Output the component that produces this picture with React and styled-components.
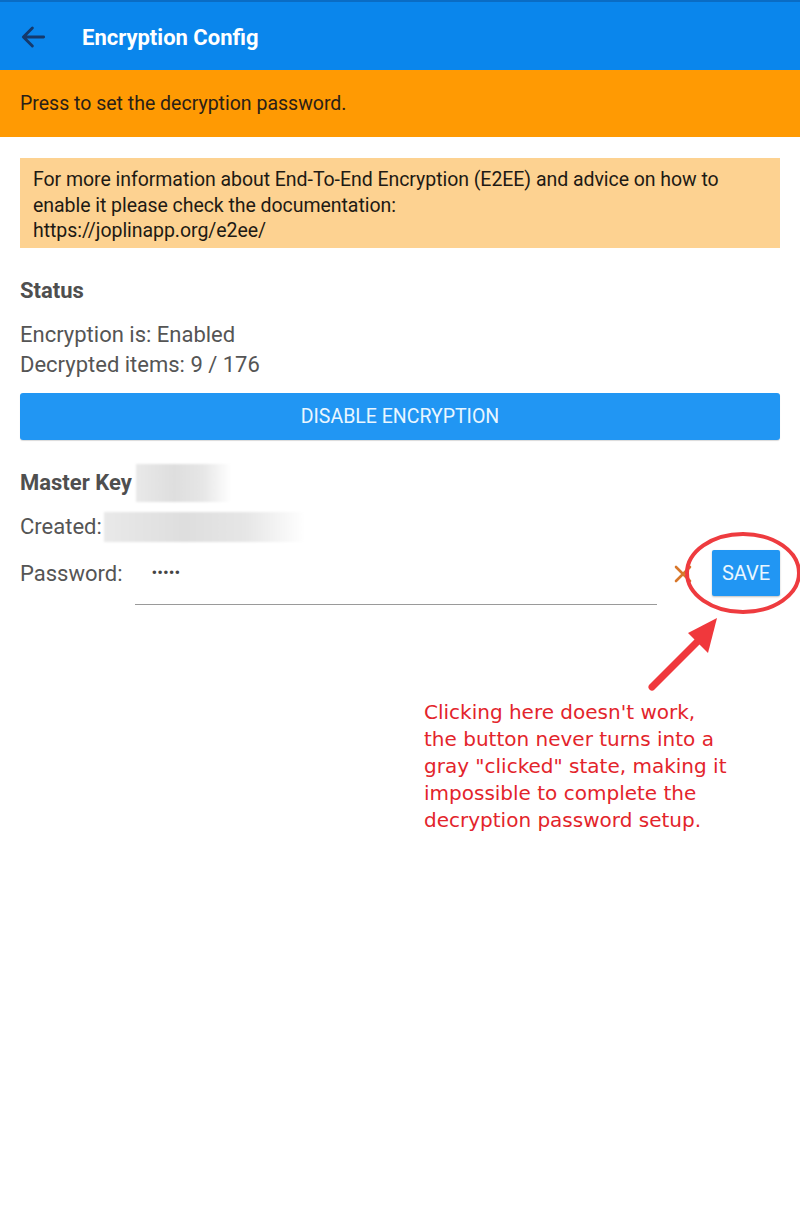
import React from 'react';
import styled, { createGlobalStyle } from 'styled-components';

// GLOBAL

const GlobalStyle = createGlobalStyle`
  html, body {
    margin: 0;
    padding: 0;
    background: #ffffff;
  }
  body {
    font-family: Roboto, "Noto Sans", "Liberation Sans", sans-serif;
    width: 800px;
    height: 1217px;
    overflow: hidden;
  }
`;

// COMPONENT

const BackArrow = () => (
  <svg width="30" height="30" viewBox="0 0 24 24">
    <path
      d="M20.5 12H4.5M11.5 4.8L4.3 12l7.2 7.2"
      fill="none"
      stroke="#15396b"
      strokeWidth="2.3"
      strokeLinecap="round"
      strokeLinejoin="round"
    />
  </svg>
);

const ClearIcon = () => (
  <svg width="18" height="18" viewBox="0 0 18 18">
    <path
      d="M2 2L16 16M16 2L2 16"
      stroke="#d8772b"
      strokeWidth="2.6"
      strokeLinecap="round"
    />
  </svg>
);

const App = () => {
  return (
    <Page>
      <GlobalStyle />
      <Header>
        <BackButton>
          <BackArrow />
        </BackButton>
        <Title>Encryption Config</Title>
      </Header>
      <Banner>Press to set the decryption password.</Banner>

      <Content>
        <InfoBox>
          For more information about End-To-End Encryption (E2EE) and advice on how to
          <br />
          enable it please check the documentation:
          <br />
          https://joplinapp.org/e2ee/
        </InfoBox>

        <SectionTitle $mt={29}>Status</SectionTitle>
        <StatusText>
          Encryption is: Enabled
          <br />
          Decrypted items: 9 / 176
        </StatusText>
        <WideButton>DISABLE ENCRYPTION</WideButton>

        <KeyRow $mt={24}>
          <SectionTitle>Master Key</SectionTitle>
          <Redacted $w={95} $h={38} $ml={4} />
        </KeyRow>
        <KeyRow $mt={10}>
          <Label>Created:</Label>
          <Redacted $w={201} $h={30} $ml={2} />
        </KeyRow>

        <PasswordRow>
          <Label>Password:</Label>
          <PasswordField>
            <Dots>•••••</Dots>
          </PasswordField>
          <ClearMark>
            <ClearIcon />
          </ClearMark>
          <SaveButton>SAVE</SaveButton>
        </PasswordRow>
      </Content>

      <Annotation>
        <svg width="800" height="1217" viewBox="0 0 800 1217">
          <ellipse
            cx="743"
            cy="573"
            rx="56"
            ry="39"
            fill="none"
            stroke="#ee3b3f"
            strokeWidth="4"
          />
          <line
            x1="652"
            y1="687"
            x2="703"
            y2="636"
            stroke="#f0383c"
            strokeWidth="7"
            strokeLinecap="round"
          />
          <polygon points="717,618 688,633 708,653" fill="#f0383c" />
        </svg>
        <Note>
          Clicking here doesn't work,
          <br />
          the button never turns into a
          <br />
          gray "clicked" state, making it
          <br />
          impossible to complete the
          <br />
          decryption password setup.
        </Note>
      </Annotation>
    </Page>
  );
};

// STYLES

const Page = styled.div`
  position: relative;
  width: 800px;
  height: 1217px;
  background: #ffffff;
`;

const Header = styled.div`
  display: flex;
  align-items: center;
  height: 70px;
  background: #0a86ec;
  border-top: 2px solid #0a6cc4;
  box-sizing: border-box;
`;

const BackButton = styled.div`
  display: flex;
  align-items: center;
  justify-content: center;
  width: 40px;
  margin-left: 13px;
  margin-right: 29px;
  margin-top: 2px;
`;

const Title = styled.div`
  color: #ffffff;
  font-weight: 700;
  font-size: 22px;
  margin-top: 2px;
`;

const Banner = styled.div`
  display: flex;
  align-items: center;
  height: 67px;
  padding: 0 20px;
  background: #ff9a03;
  color: #2a2017;
  font-size: 19.5px;
`;

const Content = styled.div`
  padding: 21px 20px 0;
  color: #555555;
`;

const InfoBox = styled.div`
  background: #fdd291;
  color: #1e1a14;
  padding: 9px 13px 4px;
  font-size: 19.5px;
  line-height: 25.5px;
  letter-spacing: -0.05px;
  white-space: nowrap;
`;

const SectionTitle = styled.div`
  margin-top: ${(p) => p.$mt || 0}px;
  font-weight: 700;
  font-size: 22px;
  line-height: 28px;
  color: #4f4f4f;
`;

const StatusText = styled.div`
  margin-top: 15px;
  font-size: 22px;
  line-height: 30px;
`;

const WideButton = styled.div`
  display: flex;
  align-items: center;
  justify-content: center;
  height: 47px;
  margin-top: 13px;
  background: #2196f3;
  border-radius: 3px;
  color: #e9f6ff;
  font-size: 19.5px;
  box-shadow: 0 1px 1px rgba(0, 0, 0, 0.15);
`;

const KeyRow = styled.div`
  display: flex;
  align-items: center;
  margin-top: ${(p) => p.$mt || 0}px;
`;

const Label = styled.div`
  font-size: 22px;
  line-height: 28px;
  color: #555555;
`;

const Redacted = styled.div`
  width: ${(p) => p.$w}px;
  height: ${(p) => p.$h}px;
  margin-left: ${(p) => p.$ml}px;
  background: linear-gradient(90deg, #e9e9e9 0%, #dedede 40%, #e6e6e6 70%, #ffffff 100%);
  filter: blur(1px);
`;

const PasswordRow = styled.div`
  display: flex;
  align-items: flex-start;
  margin-top: 18px;
  height: 60px;
`;

const PasswordField = styled.div`
  width: 522px;
  height: 45px;
  margin-left: 12px;
  border-bottom: 1px solid #9a9a9a;
  box-sizing: border-box;
  padding: 2px 0 0 17px;
`;

const Dots = styled.span`
  font-size: 17px;
  letter-spacing: 0px;
  color: #444444;
`;

const ClearMark = styled.div`
  display: flex;
  margin-left: 17px;
  margin-top: 5px;
`;

const SaveButton = styled.div`
  display: flex;
  align-items: center;
  justify-content: center;
  width: 68px;
  height: 46px;
  margin-left: auto;
  margin-top: -10px;
  background: #2196f3;
  border-radius: 2px;
  color: #e9f6ff;
  font-size: 20px;
  box-shadow: 0 1px 2px rgba(0, 0, 0, 0.25);
`;

const Annotation = styled.div`
  position: absolute;
  left: 0;
  top: 0;
  width: 800px;
  height: 1217px;
  pointer-events: none;

  svg {
    position: absolute;
    left: 0;
    top: 0;
  }
`;

const Note = styled.div`
  position: absolute;
  left: 424px;
  top: 699px;
  color: #e3242b;
  font-family: "DejaVu Sans", sans-serif;
  font-size: 20px;
  line-height: 27px;
`;

// EXPORT

export default App;
